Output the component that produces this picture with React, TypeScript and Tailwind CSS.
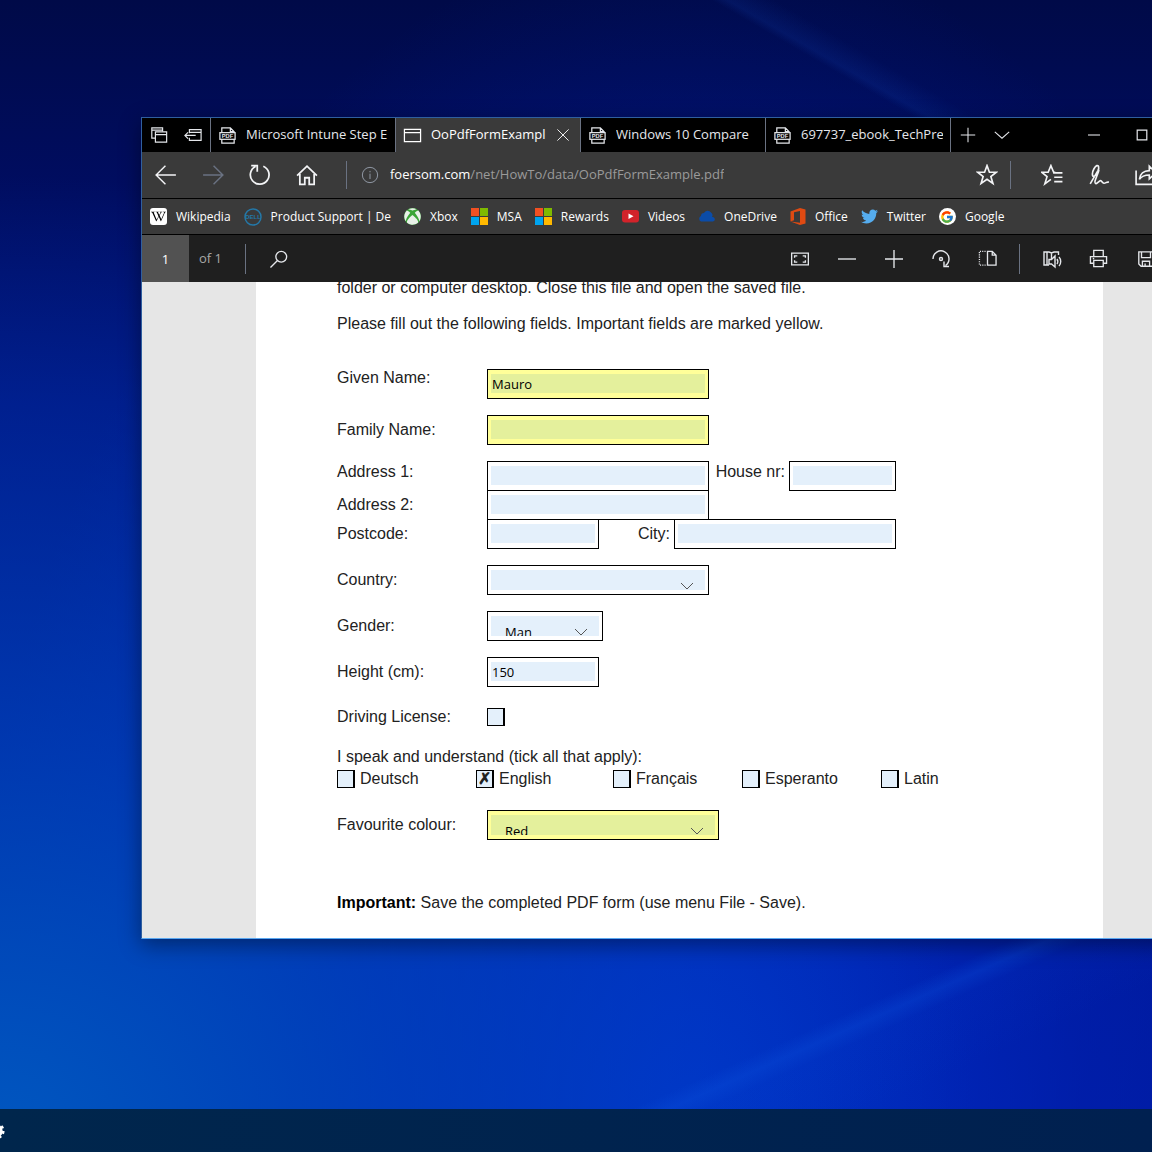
import React from "react";
import { FaTwitter, FaXbox, FaWikipediaW } from "react-icons/fa";
import { FcGoogle } from "react-icons/fc";

type IconProps = { size?: number; width?: number; className?: string; children: React.ReactNode };

const Icon: React.FC<IconProps> = ({ size = 20, width = 1.3, className = "", children }) => (
  <svg
    width={size}
    height={size}
    viewBox="0 0 20 20"
    fill="none"
    stroke="currentColor"
    strokeWidth={width}
    className={`shrink-0 ${className}`}
    aria-hidden="true"
  >
    {children}
  </svg>
);

const PdfIcon = () => (
  <Icon size={19}>
    <path d="M4 7V2h9l4 4v1M13 2v4h4M4 14v4h13v-4" />
    <rect x="2" y="7" width="16" height="7" />
    <text
      x="10"
      y="12.500"
      textAnchor="middle"
      fill="currentColor"
      stroke="none"
      className="font-['Liberation_Sans',Arial,sans-serif] text-[6px] font-bold"
    >
      PDF
    </text>
  </Icon>
);

const WindowIcon = () => (
  <Icon size={19}>
    <path d="M1.500 3.500h17v13h-17zM1.500 7h17" />
  </Icon>
);

const STAR = "M10 1.500l2.200 6h6.300l-5 3.900 1.900 6.300-5.400-3.800-5.400 3.800 1.900-6.300-5-3.900h6.300z";

const MicrosoftLogo = () => (
  <svg width="17" height="17" viewBox="0 0 17 17" aria-hidden="true">
    <path fill="#f25022" d="M0 0h8v8H0z" />
    <path fill="#7fba00" d="M9 0h8v8H9z" />
    <path fill="#00a4ef" d="M0 9h8v8H0z" />
    <path fill="#ffb900" d="M9 9h8v8H9z" />
  </svg>
);

const favourites = [
  {
    name: "Wikipedia",
    icon: (
      <span className="flex h-[17px] w-[17px] items-center justify-center rounded-[3px] bg-white text-black">
        <FaWikipediaW size={15} />
      </span>
    ),
  },
  {
    name: "Product Support | De",
    icon: (
      <svg width="18" height="18" viewBox="0 0 18 18" fill="none" stroke="#2478a8" aria-hidden="true">
        <circle cx="9" cy="9" r="8" strokeWidth="1.500" />
        <text
          x="9"
          y="11"
          textAnchor="middle"
          fill="#2478a8"
          stroke="none"
          className="font-['Liberation_Sans',Arial,sans-serif] text-[6px] font-bold"
        >
          DELL
        </text>
      </svg>
    ),
  },
  {
    name: "Xbox",
    icon: (
      <span className="flex h-[17px] w-[17px] items-center justify-center rounded-full bg-[#3aa537] text-[#e8f0e8]">
        <FaXbox size={17} />
      </span>
    ),
  },
  { name: "MSA", icon: <MicrosoftLogo /> },
  { name: "Rewards", icon: <MicrosoftLogo /> },
  {
    name: "Videos",
    icon: (
      <svg width="17" height="17" viewBox="0 0 17 17" aria-hidden="true">
        <rect y="2" width="17" height="12.500" rx="3" fill="#d2232a" />
        <path d="M6.500 5.500l5 2.700-5 2.800z" fill="#fff" />
      </svg>
    ),
  },
  {
    name: "OneDrive",
    icon: (
      <svg width="17" height="17" viewBox="0 0 17 17" fill="#0b4ca8" aria-hidden="true">
        <path d="M3 13.500a3 3 0 0 1 0-5.500 3 3 0 0 1 3-3 4 4 0 0 1 7-.5 3.500 3.500 0 0 1 1 4.500 2.300 2.300 0 0 1 1 4.500z" />
      </svg>
    ),
  },
  {
    name: "Office",
    icon: (
      <svg width="16" height="17" viewBox="0 0 15 17" fill="#e04a12" aria-hidden="true">
        <path d="M0 3.500L9.500 0 15 1.600v13.800L9.500 17 0 13.600l9.500 1.100V2.900L3.500 4.300v8L0 13.600z" />
      </svg>
    ),
  },
  { name: "Twitter", icon: <FaTwitter size={17} className="text-[#55acee]" /> },
  {
    name: "Google",
    icon: (
      <span className="flex h-[17px] w-[17px] items-center justify-center rounded-full bg-white">
        <FcGoogle size={14} />
      </span>
    ),
  },
];

const tabs = [
  { title: "Microsoft Intune Step E", active: false },
  { title: "OoPdfFormExampl", active: true },
  { title: "Windows 10 Compare", active: false },
  { title: "697737_ebook_TechPre", active: false },
];

const ToolButton: React.FC<{ label: string; className?: string; children: React.ReactNode }> = ({
  label,
  className = "w-[47px]",
  children,
}) => (
  <button
    type="button"
    aria-label={label}
    className={`flex h-full shrink-0 items-center justify-center hover:bg-white/10 ${className}`}
  >
    {children}
  </button>
);

const TabBar = () => (
  <div className="flex h-[34px] bg-black pr-[51px] text-gray-200">
    <div className="flex w-[68px] shrink-0">
      <ToolButton label="Tabs set aside" className="w-[34px]">
        <Icon size={18}>
          <path d="M6 13.500H2V2h12v4M2 4.500h12" />
          <path d="M6 6.500h12.500V18H6zM6 9.500h12.500" />
        </Icon>
      </ToolButton>
      <ToolButton label="Set these tabs aside" className="w-[34px]">
        <Icon size={18}>
          <path d="M6 8V4h13v12H6v-3M6 7h13M13 10.500H1M4.500 7L1 10.500 4.500 14" />
        </Icon>
      </ToolButton>
    </div>

    {tabs.map((tab) => (
      <div
        key={tab.title}
        className={`flex w-[185px] shrink-0 items-center gap-[9px] border-l border-gray-500 px-[7px] ${
          tab.active ? "bg-[#3a3a3a] text-white" : ""
        }`}
      >
        {tab.active ? <WindowIcon /> : <PdfIcon />}
        <button type="button" className="h-full min-w-0 flex-1 overflow-hidden whitespace-nowrap text-left text-[13px]">
          {tab.title}
        </button>
        {tab.active && (
          <button type="button" aria-label="Close tab" className="mr-[3px]">
            <Icon size={14}>
              <path d="M2 2l16 16M18 2L2 18" />
            </Icon>
          </button>
        )}
      </div>
    ))}

    <div className="flex border-l border-gray-500">
      <ToolButton label="New tab" className="w-[34px]">
        <Icon size={16}>
          <path d="M10 1v18M1 10h18" />
        </Icon>
      </ToolButton>
      <ToolButton label="Show tab previews" className="w-[34px]">
        <Icon size={16}>
          <path d="M1 6l9 8 9-8" />
        </Icon>
      </ToolButton>
    </div>

    <div className="ml-auto flex">
      <ToolButton label="Minimize" className="w-12">
        <Icon size={12} width={1.800}>
          <path d="M0 10h20" />
        </Icon>
      </ToolButton>
      <ToolButton label="Maximize" className="w-12">
        <Icon size={12} width={2}>
          <path d="M2 2h16v16H2z" />
        </Icon>
      </ToolButton>
    </div>
  </div>
);

const AddressBar = () => (
  <div className="flex h-[47px] items-center border-b border-black bg-[#3a3a3a] pr-[48px] text-gray-100">
    <ToolButton label="Back">
      <Icon size={22}>
        <path d="M19 10H1M9.500 1.500L1 10l8.500 8.500" />
      </Icon>
    </ToolButton>
    <ToolButton label="Forward" className="w-[47px] text-gray-500">
      <Icon size={22}>
        <path d="M1 10h18M10.500 1.500L19 10l-8.500 8.500" />
      </Icon>
    </ToolButton>
    <ToolButton label="Refresh">
      <Icon size={22} width={1.600}>
        <path d="M13 2a8.500 8.500 0 1 1-7 .200M2 1.500h5.500V7" />
      </Icon>
    </ToolButton>
    <ToolButton label="Home">
      <Icon size={22} width={1.600}>
        <path d="M1 10.500L10 2l9 8.500M3.500 9v9.500H8v-6h4v6h4.500V9" />
      </Icon>
    </ToolButton>
    <span className="ml-4 h-7 w-px bg-gray-500" />
    <div className="ml-[14px] flex min-w-0 flex-1 items-center gap-[11px]">
      <Icon size={18} width={1} className="text-gray-400">
        <circle cx="10" cy="10" r="8.500" />
        <path d="M10 8.500v6M10 5.500v1.500" />
      </Icon>
      <div role="textbox" aria-label="Address" className="truncate text-[13px] text-[#9a9a9a]">
        <span className="text-white">foersom.com</span>/net/HowTo/data/OoPdfFormExample.pdf
      </div>
    </div>
    <ToolButton label="Add to favorites">
      <Icon size={22} width={1.500}>
        <path d={STAR} />
      </Icon>
    </ToolButton>
    <span className="mr-[17px] h-7 w-px bg-gray-500" />
    <ToolButton label="Favorites hub">
      <Icon size={22} width={1.500}>
        <path d="M13 7.500h-1.500L9 1.500l-2.500 6H.5l5 4-2 6.500L9 14M11 8h8.500M12 12h7.500M12 16h7.500" />
      </Icon>
    </ToolButton>
    <ToolButton label="Add notes">
      <Icon size={22} width={1.500}>
        <path d="M2 18L9 6c1.500-3 .5-5-1-4.500S4 6 4 9s2 3 3.500.5S10.500 4 9.500 7L6.500 15c-.8 2.500.5 3.500 2 2.200l2-1.700c2-1.500 2 2 4 2s2-1.500 4.500-1" />
      </Icon>
    </ToolButton>
    <ToolButton label="Share">
      <Icon size={22} width={1.500}>
        <path d="M1 6v12.500h16V14M4 14c.5-5 4-8 9-8V2l6 6-6 5.500V10c-4 0-7 1-9 4z" />
      </Icon>
    </ToolButton>
  </div>
);

const FavouritesBar = () => (
  <nav className="flex h-[36px] items-center gap-[13px] border-b border-black bg-[#3a3a3a] pl-2 text-xs text-white">
    {favourites.map((item) => (
      <a key={item.name} href="#" className="flex shrink-0 items-center gap-[9px] whitespace-nowrap">
        {item.icon}
        {item.name}
      </a>
    ))}
  </nav>
);

const PdfToolbar = () => (
  <div className="flex h-[47px] items-center bg-[#1f1f1f] pr-[48px] text-gray-200">
    <input
      aria-label="Page number"
      defaultValue="1"
      className="h-full w-[47px] bg-[#525252] text-center text-[13px] text-white"
    />
    <span className="ml-[10px] text-[13px] text-[#a8a8a8]">of 1</span>
    <span className="ml-[23px] h-[30px] w-px bg-gray-500" />
    <ToolButton label="Find on page" className="ml-[9px] w-[47px]">
      <Icon size={18} width={1.500}>
        <circle cx="12.500" cy="7.500" r="6" />
        <path d="M8 12l-7.500 7.500" />
      </Icon>
    </ToolButton>

    <div className="ml-auto flex h-full items-center">
      <ToolButton label="Fit to page">
        <Icon size={18} width={1.500}>
          <path d="M.7 3.500h18.600v13H.7z" />
          <path d="M4 8.500V6.500h3M13 6.500h3v2M16 11.500v2h-3M7 13.500H4v-2" />
        </Icon>
      </ToolButton>
      <ToolButton label="Zoom out">
        <Icon size={18} width={1.500}>
          <path d="M0 10h20" />
        </Icon>
      </ToolButton>
      <ToolButton label="Zoom in">
        <Icon size={18} width={1.500}>
          <path d="M0 10h20M10 0v20" />
        </Icon>
      </ToolButton>
      <ToolButton label="Rotate">
        <Icon size={20} width={1.400}>
          <path d="M2 10a8 8 0 1 1 12.500 6.500M13 12.500v5h5" />
          <circle cx="10" cy="10" r="1.500" />
        </Icon>
      </ToolButton>
      <ToolButton label="Layout">
        <Icon size={19} width={1.400}>
          <path d="M10 2.500h5l4 4V17h-9zM15 2.500v4h4" />
          <path d="M8 2.500H1.500V17H8" strokeDasharray="1.200 1.200" />
        </Icon>
      </ToolButton>
      <span className="mx-2 h-[30px] w-px bg-gray-500" />
      <ToolButton label="Read aloud">
        <Icon size={20} width={1.400}>
          <path d="M7 16H2V3h5l2.500 1L12 3h4.500v3M9.500 4v6M5 3v13" />
          <path d="M7 10.500h2.500L13 7v11l-3.500-3H7zM15 10c1 1.500 1 3.500 0 5M17 8c2.300 2.500 2.300 6.500 0 9" />
        </Icon>
      </ToolButton>
      <ToolButton label="Print">
        <Icon size={19} width={1.400}>
          <path d="M5 8V1.500h10V8M5 15H1.500V8h17v7H15" />
          <path d="M5 12h10v6.500H5zM4 10h1.500" />
        </Icon>
      </ToolButton>
      <ToolButton label="Save">
        <Icon size={18} width={1.500}>
          <path d="M2 2h16v16H4.500L2 15.500zM5 2v6.500h10V2M6 18v-5.500h8V18M9 15v3" />
        </Icon>
      </ToolButton>
    </div>
  </div>
);

const fieldLook = {
  blue: "bg-[#e4f0fb] shadow-[inset_0_0_0_3px_#fff,inset_0_4px_0_0_#fff,inset_0_-5px_0_0_#fff]",
  yellow: "bg-[#e4f09c] shadow-[inset_0_0_0_3px_#ffff99,inset_0_4px_0_0_#ffff99,inset_0_-5px_0_0_#ffff99]",
};

const uiFont = "font-['Open_Sans','Noto_Sans',sans-serif]";

type FieldProps = { id: string; width: string; tone?: "blue" | "yellow"; value?: string };

const TextField: React.FC<FieldProps> = ({ id, width, tone = "blue", value = "" }) => (
  <input
    id={id}
    type="text"
    defaultValue={value}
    className={`h-[30px] shrink-0 rounded-none border border-black px-1 text-[13px] text-black ${uiFont} ${width} ${fieldLook[tone]}`}
  />
);

// the reader clips its native drop-downs to the box of the form field
const SelectField: React.FC<FieldProps & { options: string[] }> = ({ id, width, tone = "blue", options }) => (
  <div
    className={`h-[30px] shrink-0 border border-black px-[3px] py-1 ${width} ${
      tone === "yellow" ? "bg-[#ffff99]" : "bg-white"
    }`}
  >
    <div className={`relative h-5 overflow-hidden ${tone === "yellow" ? "bg-[#e4f09c]" : "bg-[#e4f0fb]"}`}>
      <select
        id={id}
        className={`block h-8 w-full appearance-none bg-transparent pl-[14px] text-[13px] text-black ${uiFont}`}
      >
        {options.map((option) => (
          <option key={option}>{option}</option>
        ))}
      </select>
      <svg
        width="14"
        height="8"
        viewBox="0 0 14 8"
        fill="none"
        stroke="#555"
        className="pointer-events-none absolute right-[11px] top-3"
        aria-hidden="true"
      >
        <path d="M1 1l6 6 6-6" />
      </svg>
    </div>
  </div>
);

const CheckBox: React.FC<{ id: string; checked?: boolean }> = ({ id, checked = false }) => (
  <input
    id={id}
    type="checkbox"
    defaultChecked={checked}
    className="flex h-[18px] w-[18px] shrink-0 appearance-none items-center justify-center border border-r-2 border-black bg-[#e4f0fb] checked:before:text-base checked:before:font-bold checked:before:leading-4 checked:before:content-['✗']"
  />
);

const Row: React.FC<{ id: string; label: string; labelClass?: string; className?: string; children: React.ReactNode }> = ({
  id,
  label,
  labelClass = "",
  className = "",
  children,
}) => (
  <div className={`flex items-center ${className}`}>
    <label htmlFor={id} className={`w-[150px] shrink-0 ${labelClass}`}>
      {label}
    </label>
    {children}
  </div>
);

const languages = ["Deutsch", "English", "Français", "Esperanto", "Latin"];

const PdfPage = () => (
  <div className="flex justify-center overflow-hidden bg-[#e6e6e6]">
    <form className="w-[847px] bg-white pb-[26px] pl-[81px] pr-[207px] font-['Liberation_Sans',Arial,sans-serif] text-base leading-[18px] text-[#222]">
      <p className="-mt-[3px] whitespace-nowrap">folder or computer desktop. Close this file and open the saved file.</p>
      <p className="mt-[18px] whitespace-nowrap">
        Please fill out the following fields. Important fields are marked yellow.
      </p>

      <div className="mt-9 flex flex-col gap-4">
        <Row id="given" label="Given Name:" labelClass="pb-3">
          <TextField id="given" width="w-[222px]" tone="yellow" value="Mauro" />
        </Row>
        <Row id="family" label="Family Name:">
          <TextField id="family" width="w-[222px]" tone="yellow" />
        </Row>
        <div>
          <Row id="address1" label="Address 1:" labelClass="pb-2">
            <TextField id="address1" width="w-[222px]" />
            <div className="ml-auto flex items-center gap-1">
              <label htmlFor="house" className="pb-2">
                House nr:
              </label>
              <TextField id="house" width="w-[107px]" />
            </div>
          </Row>
          <Row id="address2" label="Address 2:" className="-mt-px">
            <TextField id="address2" width="w-[222px]" />
          </Row>
          <Row id="postcode" label="Postcode:" className="-mt-px">
            <TextField id="postcode" width="w-[112px]" />
            <div className="ml-auto flex items-center gap-1">
              <label htmlFor="city">City:</label>
              <TextField id="city" width="w-[222px]" />
            </div>
          </Row>
        </div>
        <Row id="country" label="Country:">
          <SelectField id="country" width="w-[222px]" options={[""]} />
        </Row>
        <Row id="gender" label="Gender:">
          <SelectField id="gender" width="w-[116px]" options={["Man", "Woman"]} />
        </Row>
        <Row id="height" label="Height (cm):">
          <TextField id="height" width="w-[112px]" value="150" />
        </Row>
      </div>

      <Row id="license" label="Driving License:" className="mt-[21px]">
        <CheckBox id="license" />
      </Row>

      <fieldset className="mt-[22px]">
        <legend>I speak and understand (tick all that apply):</legend>
        <div className="mt-1 grid grid-cols-[139px_137px_129px_139px_auto]">
          {languages.map((language) => (
            <div key={language} className="flex items-center gap-[5px]">
              <CheckBox id={language} checked={language === "English"} />
              <label htmlFor={language}>{language}</label>
            </div>
          ))}
        </div>
      </fieldset>

      <Row id="colour" label="Favourite colour:" className="mt-[22px]">
        <SelectField id="colour" width="w-[232px]" tone="yellow" options={["Red", "Green", "Blue"]} />
      </Row>

      <p className="mt-[54px] whitespace-nowrap">
        <b className="text-black">Important:</b> Save the completed PDF form (use menu File - Save).
      </p>
    </form>
  </div>
);

export default function App() {
  return (
    <div
      className={`flex min-h-screen flex-col overflow-hidden bg-[linear-gradient(156deg,transparent_83.5%,#0a50dc50_84.5%,#0a50dc10_85.5%,transparent_90%),linear-gradient(30deg,transparent_86%,#1040b030_86.5%,transparent_88%),radial-gradient(ellipse_at_0%_100%,#0058c0_0%,#0048c0b0_25%,transparent_60%),radial-gradient(ellipse_at_60%_100%,#0030cc_0%,#0024b880_40%,transparent_75%),linear-gradient(180deg,#000a48_0%,#00107c_35%,#00189c_100%)] ${uiFont}`}
    >
      {/* the window hangs over the right edge of the desktop */}
      <main className="-mr-[66px] flex-1 pl-[141px] pt-[117px]">
        <div className="border border-b-[#5aa8f0] border-l-[#2f5f9f] border-r-[#2f5f9f] border-t-[#2f5f9f] shadow-[0_6px_20px_rgba(0,0,0,0.4)]">
          <TabBar />
          <AddressBar />
          <FavouritesBar />
          <PdfToolbar />
          <PdfPage />
        </div>
      </main>
      <footer className="flex h-[43px] items-center bg-gradient-to-r from-[#00264c] to-[#002050]">
        <button type="button" aria-label="Settings" className="-ml-[13px] text-white">
          <svg width="18" height="18" viewBox="0 0 20 20" fill="none" stroke="currentColor" aria-hidden="true">
            <circle cx="10" cy="10" r="5.500" strokeWidth="4" />
            <circle cx="10" cy="10" r="8" strokeWidth="3" strokeDasharray="3.140 3.140" />
          </svg>
        </button>
      </footer>
    </div>
  );
}
